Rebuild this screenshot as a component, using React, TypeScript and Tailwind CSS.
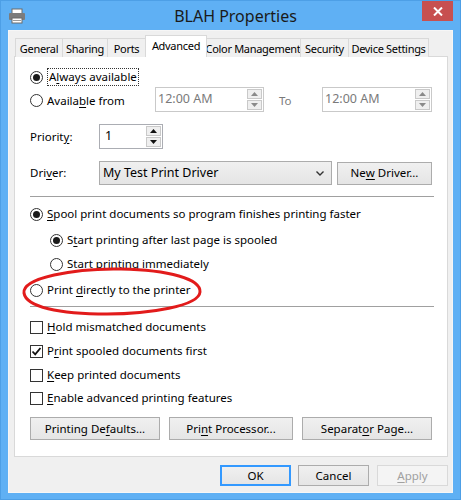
import React from 'react'

function U({ children }: { children: React.ReactNode }) {
  return <span className="underline underline-offset-[2px] decoration-1">{children}</span>
}

function Radio({ checked }: { checked?: boolean }) {
  return (
    <span className="w-[13px] h-[13px] rounded-full border border-[#333] bg-white flex items-center justify-center shrink-0">
      {checked && <span className="w-[7px] h-[7px] rounded-full bg-[#1a1a1a]" />}
    </span>
  )
}

function Check({ checked }: { checked?: boolean }) {
  return (
    <span className="w-[13px] h-[13px] border border-[#333] bg-white flex items-center justify-center shrink-0">
      {checked && (
        <svg width="11" height="11" viewBox="0 0 11 11">
          <path d="M1.5 5.5 L4.2 8.3 L9.5 2" fill="none" stroke="#111" strokeWidth="1.8" />
        </svg>
      )}
    </span>
  )
}

function SpinButtons({ disabled }: { disabled?: boolean }) {
  const c = disabled ? '#8a8a8a' : '#111'
  return (
    <div className="flex flex-col gap-[1px] pr-[1px]">
      <div className="w-[15px] h-[10px] border border-[#c9c9c9] bg-[#efefef] flex items-center justify-center">
        <svg width="7" height="4" viewBox="0 0 7 4"><path d="M0 4 L3.5 0 L7 4 Z" fill={c} /></svg>
      </div>
      <div className="w-[15px] h-[10px] border border-[#c9c9c9] bg-[#efefef] flex items-center justify-center">
        <svg width="7" height="4" viewBox="0 0 7 4"><path d="M0 0 L3.5 4 L7 0 Z" fill={c} /></svg>
      </div>
    </div>
  )
}

function Btn({ children, className = '' }: { children: React.ReactNode; className?: string }) {
  return (
    <div className={`border border-[#acacac] bg-gradient-to-b from-[#f0f0f0] to-[#e5e5e5] flex items-center justify-center text-black whitespace-nowrap ${className}`}>
      {children}
    </div>
  )
}

const tabs = ['General', 'Sharing', 'Ports', 'Advanced', 'Color Management', 'Security', 'Device Settings']
const tabW = [48, 46, 39, 62, 96, 49, 81]

export default function App() {
  return (
    <div className="w-[461px] h-[500px] bg-[#5fb0f4] border border-[#4d9fe6] flex flex-col font-['Noto_Sans',sans-serif] text-[11.5px] text-black leading-none select-none">
      {/* title bar */}
      <div className="h-[29px] flex items-start shrink-0">
        <div className="pl-[7px] pt-[7px] w-[60px]">
          <svg width="18" height="16" viewBox="0 0 18 16">
            <rect x="4" y="1" width="10" height="5" fill="#fff" stroke="#6b6b6b" />
            <rect x="1" y="5" width="16" height="7" rx="1" fill="#7c7c7c" />
            <rect x="4" y="10" width="10" height="5" fill="#fff" stroke="#6b6b6b" />
            <rect x="5" y="12" width="8" height="1" fill="#9a9a9a" />
          </svg>
        </div>
        <div className="flex-1 text-center pt-[7px] text-[16px] text-[#1a1a1a] pl-[10px]">BLAH Properties</div>
        <div className="w-[60px] flex justify-end pr-[7px]">
          <div className="w-[31px] h-[20px] bg-[#c75050] flex items-center justify-center">
            <svg width="10" height="9" viewBox="0 0 10 9">
              <path d="M1 0.5 L9 8.5 M9 0.5 L1 8.5" stroke="#fff" strokeWidth="2" />
            </svg>
          </div>
        </div>
      </div>

      {/* client */}
      <div className="mx-[7px] mb-[7px] flex-1 bg-[#f0f0f0] border border-[#f6f6f6] flex flex-col pl-[5px] pr-[4px] pt-[4px] pb-[6px]">
        {/* tabs */}
        <div className="flex items-end h-[22px] pl-[1px] relative z-10 whitespace-nowrap text-[11px] tracking-[-0.3px]">
          {tabs.map((t, i) =>
            t === 'Advanced' ? (
              <div
                key={t}
                style={{ width: tabW[i] }}
                className="h-[22px] -mx-[1px] bg-white border border-[#d9d9d9] border-b-0 flex items-center justify-center pb-[3px] relative"
              >
                {t}
              </div>
            ) : (
              <div
                key={t}
                style={{ width: tabW[i] }}
                className="h-[19px] bg-[#f0f0f0] border border-[#d9d9d9] border-b-0 -ml-[1px] first:ml-0 flex items-center justify-center"
              >
                {t}
              </div>
            )
          )}
        </div>

        {/* panel */}
        <div className="-mt-[1px] h-[401px] bg-white border border-[#d9d9d9] flex flex-col pl-[15px] pr-[13px] relative whitespace-nowrap">
          <div className="mt-[11px] h-[18px] flex items-center gap-[4px]">
            <Radio checked />
            <span className="border border-dotted border-[#333] px-[1px] py-[2px]">
              A<U>l</U>ways available
            </span>
          </div>

          <div className="mt-[1px] h-[25px] flex items-center">
            <div className="w-[125px] flex items-center gap-[4px] pt-[2px]">
              <Radio />
              <span>
                Availa<U>b</U>le from
              </span>
            </div>
            <div className="w-[109px] h-[25px] border border-[#c9c9c9] bg-white flex items-center justify-between pl-[2px]">
              <span className="text-[#7a7a7a] text-[12.5px]">12:00 AM</span>
              <SpinButtons disabled />
            </div>
            <span className="w-[58px] pl-[15px] text-[#7a7a7a] pt-[2px]">To</span>
            <div className="w-[110px] h-[25px] border border-[#c9c9c9] bg-white flex items-center justify-between pl-[2px]">
              <span className="text-[#7a7a7a] text-[12.5px]">12:00 AM</span>
              <SpinButtons disabled />
            </div>
          </div>

          <div className="mt-[12px] h-[25px] flex items-center">
            <span className="w-[69px]">
              Priorit<U>y</U>:
            </span>
            <div className="w-[64px] h-[25px] border border-[#abadb3] bg-white flex items-center justify-between pl-[5px]">
              <span className="text-[12.5px]">1</span>
              <SpinButtons />
            </div>
          </div>

          <div className="mt-[12px] h-[24px] flex items-center">
            <span className="w-[69px]">
              Dri<U>v</U>er:
            </span>
            <div className="w-[233px] h-[24px] border border-[#acacac] bg-gradient-to-b from-[#f0f0f0] to-[#e5e5e5] flex items-center justify-between pl-[3px] pr-[7px]">
              <span className="text-[12.5px]">My Test Print Driver</span>
              <svg width="8" height="5" viewBox="0 0 8 5">
                <path d="M0.5 0.5 L4 4 L7.5 0.5" fill="none" stroke="#333" strokeWidth="1.4" />
              </svg>
            </div>
            <Btn className="ml-[5px] w-[95px] h-[23px]">
              Ne<U>w</U>&nbsp;Driver...
            </Btn>
          </div>

          <div className="mt-[11px] h-px bg-[#a0a0a0]" />

          <div className="mt-[8px] h-[18px] flex items-center gap-[4px]">
            <Radio checked />
            <span>
              <U>S</U>pool print documents so program finishes printing faster
            </span>
          </div>
          <div className="mt-[8px] h-[18px] flex items-center gap-[4px] pl-[20px]">
            <Radio checked />
            <span>
              S<U>t</U>art printing after last page is spooled
            </span>
          </div>
          <div className="mt-[6px] h-[18px] flex items-center gap-[4px] pl-[20px]">
            <Radio />
            <span>
              Start printing <U>i</U>mmediately
            </span>
          </div>
          <div className="mt-[8px] h-[18px] flex items-center gap-[4px]">
            <Radio />
            <span>
              Print <U>d</U>irectly to the printer
            </span>
          </div>

          <div className="mt-[7px] h-px bg-[#a0a0a0]" />

          <div className="mt-[11px] h-[18px] flex items-center gap-[4px]">
            <Check />
            <span>
              <U>H</U>old mismatched documents
            </span>
          </div>
          <div className="mt-[6px] h-[18px] flex items-center gap-[4px]">
            <Check checked />
            <span>
              P<U>r</U>int spooled documents first
            </span>
          </div>
          <div className="mt-[6px] h-[18px] flex items-center gap-[4px]">
            <Check />
            <span>
              <U>K</U>eep printed documents
            </span>
          </div>
          <div className="mt-[5px] h-[18px] flex items-center gap-[4px]">
            <Check />
            <span>
              <U>E</U>nable advanced printing features
            </span>
          </div>

          <div className="mt-[10px] flex items-center">
            <Btn className="w-[130px] h-[23px]">
              Printing De<U>f</U>aults...
            </Btn>
            <Btn className="ml-[9px] w-[124px] h-[23px]">
              Pri<U>n</U>t Processor...
            </Btn>
            <Btn className="ml-[9px] w-[130px] h-[23px]">
              Separat<U>o</U>r Page...
            </Btn>
          </div>

          {/* red annotation */}
          <svg className="absolute left-[4px] top-[207px] pointer-events-none" width="186" height="54" viewBox="0 0 186 54">
            <path
              d="M5 29 C3 14 55 4 102 5 C150 6 182 15 181 28 C180 42 130 50 88 50 C40 50 7 43 5 29 Z"
              fill="none"
              stroke="#e21b1b"
              strokeWidth="3"
            />
          </svg>
        </div>

        {/* bottom buttons */}
        <div className="mt-[8px] flex justify-end items-center">
          <div className="w-[71px] h-[21px] border-2 border-[#3399ff] bg-gradient-to-b from-[#f0f0f0] to-[#e5e5e5] flex items-center justify-center">
            OK
          </div>
          <Btn className="ml-[7px] w-[71px] h-[21px]">Cancel</Btn>
          <div className="ml-[8px] w-[71px] h-[21px] border border-[#d9d9d9] bg-[#f4f4f4] flex items-center justify-center text-[#a0a0a0]">
            <U>A</U>pply
          </div>
        </div>
      </div>
    </div>
  )
}
